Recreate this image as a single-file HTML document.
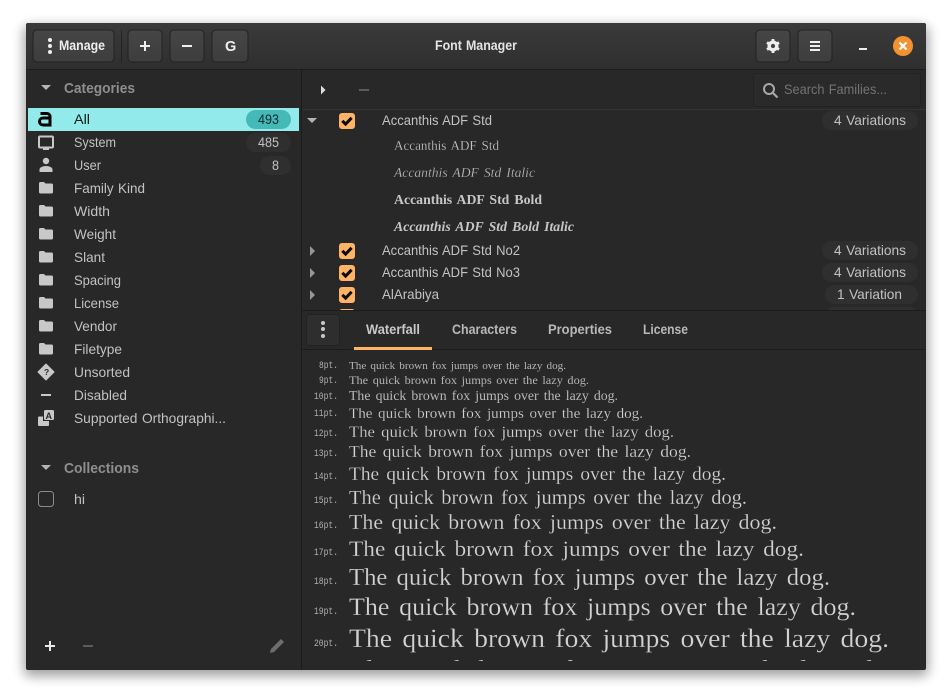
<!DOCTYPE html>
<html><head><meta charset="utf-8"><style>
html,body{margin:0;padding:0;background:#fff;width:952px;height:699px;overflow:hidden}
svg{display:block;position:absolute;left:0;top:0}
text{font-family:"Liberation Sans",sans-serif;fill:#c2c2c2;font-size:14px;word-spacing:.05em}
.s{font-family:"Liberation Serif",serif;fill:#d2d2d2;word-spacing:.12em}
.t{stroke:#282828;stroke-width:.18px}
.m{font-family:"Liberation Mono",monospace;fill:#b0b0b0;font-size:10px}
.b{font-weight:bold;fill:#d6d6d6;font-size:14px}
.h{font-weight:bold;fill:#8e8e8e;font-size:15px}
</style></head><body>
<svg width="952" height="699" viewBox="0 0 952 699" xmlns="http://www.w3.org/2000/svg">
<defs>
<linearGradient id="hd" x1="0" y1="0" x2="0" y2="1"><stop offset="0" stop-color="#3a3a3a"/><stop offset="1" stop-color="#2f2f2f"/></linearGradient>
<linearGradient id="bt" x1="0" y1="0" x2="0" y2="1"><stop offset="0" stop-color="#464646"/><stop offset="1" stop-color="#3d3d3d"/></linearGradient>
<filter id="sh" x="-5%" y="-5%" width="110%" height="112%"><feGaussianBlur stdDeviation="6"/></filter>
<clipPath id="wf"><rect x="302" y="350" width="624" height="311"/></clipPath>
<clipPath id="fl"><rect x="302" y="110" width="624" height="200"/></clipPath>
<g id="folder"><path d="M0 2.500a1.500 1.500 0 0 1 1.500-1.500h3.500l1.500 1.500h6a1.500 1.500 0 0 1 1.500 1.500v7a1.500 1.500 0 0 1-1.500 1.500h-11a1.500 1.500 0 0 1-1.500-1.500z" fill="#c8c8c8"/></g>
<g id="chk"><rect x="0" y="0" width="16" height="16" rx="3" fill="#ffb366"/><path d="M3.300 7.800l3.300 3.300 6-6.300" fill="none" stroke="#0c0c0c" stroke-width="3"/></g>
<path id="td" d="M0 0h10l-5 5z" fill="#b4b4b4"/>
</defs>

<rect x="24" y="26" width="904" height="650" rx="6" fill="#000" opacity="0.38" filter="url(#sh)"/>
<rect x="26" y="23" width="900" height="647" rx="2" fill="#282828"/>
<path d="M26 69V27a4 4 0 0 1 4-4h892a4 4 0 0 1 4 4v42z" fill="url(#hd)"/>
<rect x="26" y="69" width="900" height="1" fill="#1e1e1e"/>
<rect x="301" y="70" width="1" height="600" fill="#1c1c1c"/>

<!-- Header buttons -->
<g stroke="#222" stroke-width="1" fill="url(#bt)">
<rect x="33" y="30" width="81" height="32" rx="4"/>
<rect x="128" y="30" width="34" height="32" rx="4"/>
<rect x="170" y="30" width="34" height="32" rx="4"/>
<rect x="212" y="30" width="36" height="32" rx="4"/>
<rect x="756" y="30" width="34" height="32" rx="4"/>
<rect x="798" y="30" width="34" height="32" rx="4"/>
</g>
<rect x="121" y="30" width="1" height="33" fill="#242424"/>
<circle cx="50" cy="40" r="2" fill="#eee"/><circle cx="50" cy="46" r="2" fill="#eee"/><circle cx="50" cy="52" r="2" fill="#eee"/>
<text x="59" y="50" class="b" textLength="46" lengthAdjust="spacingAndGlyphs" style="fill:#eee">Manage</text>
<path d="M140 46h10M145 41v10" stroke="#eee" stroke-width="2"/>
<path d="M182 46h10" stroke="#eee" stroke-width="2"/>
<text x="225" y="51" class="b" style="fill:#eee;font-size:14.500px">G</text>
<text x="435" y="50" class="b" textLength="82" lengthAdjust="spacingAndGlyphs" style="fill:#e4e4e4">Font Manager</text>
<!-- gear -->
<g transform="translate(773 46)"><circle r="3.800" fill="none" stroke="#eee" stroke-width="3.400"/><g stroke="#eee" stroke-width="2.800"><path d="M0-7V-4.500M0 4.500V7M-6-3.500L-3.900-2.250M3.900 2.250L6 3.500M-6 3.500L-3.900 2.250M3.900-2.250L6-3.500"/></g></g>
<path d="M810 42h10M810 46h10M810 50h10" stroke="#eee" stroke-width="2"/>
<rect x="859" y="48" width="8" height="2" fill="#eee"/>
<circle cx="903" cy="46" r="10" fill="#f39230"/>
<path d="M899.500 42.500l7 7M906.500 42.500l-7 7" stroke="#fff" stroke-width="2.200"/>

<!-- Sidebar -->
<use href="#td" x="41" y="85"/>
<text x="64" y="93" class="h" textLength="71" lengthAdjust="spacingAndGlyphs">Categories</text>
<rect x="28" y="108" width="271" height="23" fill="#93eaea"/>
<rect x="246" y="110" width="45" height="19" rx="9.500" fill="#45b8b8"/>
<rect x="246" y="133" width="45" height="19" rx="9.500" fill="#2f2f2f"/>
<rect x="260" y="156" width="31" height="19" rx="9.500" fill="#2f2f2f"/>
<text x="258" y="124" textLength="21" lengthAdjust="spacingAndGlyphs" style="fill:#0a2a2a;font-size:13.500px">493</text>
<text x="258" y="147" textLength="21" lengthAdjust="spacingAndGlyphs" style="font-size:13.500px">485</text>
<text x="272" y="170" textLength="7" lengthAdjust="spacingAndGlyphs" style="font-size:13.500px">8</text>

<path d="M40.500 113.500h6.500a3 3 0 0 1 3 3v8.500h-7a3.500 3.500 0 0 1 0-7h6" fill="none" stroke="#000" stroke-width="3"/>
<path d="M39 137.500a1 1 0 0 1 1-1h12a1 1 0 0 1 1 1v9a1 1 0 0 1-1 1h-12a1 1 0 0 1-1-1z" fill="none" stroke="#c8c8c8" stroke-width="2"/><rect x="43" y="148" width="6" height="2" fill="#c8c8c8"/>
<circle cx="46" cy="161" r="3.200" fill="#c8c8c8"/><path d="M39.500 172v-2.500c0-2 3-3.500 6.500-3.500s6.500 1.500 6.500 3.500v2.500z" fill="#c8c8c8"/>
<use href="#folder" x="39" y="181"/>
<use href="#folder" x="39" y="204"/>
<use href="#folder" x="39" y="227"/>
<use href="#folder" x="39" y="250"/>
<use href="#folder" x="39" y="273"/>
<use href="#folder" x="39" y="296"/>
<use href="#folder" x="39" y="319"/>
<use href="#folder" x="39" y="342"/>
<path d="M46 364l8 8-8 8-8-8z" fill="#c8c8c8" stroke="#c8c8c8" stroke-linejoin="round"/>
<text x="44" y="375" style="fill:#282828;font-size:8.500px;font-weight:bold">?</text>
<rect x="41" y="394" width="10" height="2" fill="#c8c8c8"/>
<rect x="44" y="410" width="10" height="10" rx="1.500" fill="#c8c8c8"/><text x="45.500" y="419" style="fill:#282828;font-size:9px;font-weight:bold">A</text>
<path d="M38 417.500a1 1 0 0 1 1-1h4v4.500h6v4a1 1 0 0 1-1 1h-9a1 1 0 0 1-1-1z" fill="#c8c8c8"/>

<text x="74" y="124" textLength="16" lengthAdjust="spacingAndGlyphs" style="fill:#0a1a1a">All</text>
<text x="74" y="147" textLength="42" lengthAdjust="spacingAndGlyphs">System</text>
<text x="74" y="170" textLength="27" lengthAdjust="spacingAndGlyphs">User</text>
<text x="74" y="193" textLength="71" lengthAdjust="spacingAndGlyphs">Family Kind</text>
<text x="74" y="216" textLength="36" lengthAdjust="spacingAndGlyphs">Width</text>
<text x="74" y="239" textLength="42" lengthAdjust="spacingAndGlyphs">Weight</text>
<text x="74" y="262" textLength="31" lengthAdjust="spacingAndGlyphs">Slant</text>
<text x="74" y="285" textLength="47" lengthAdjust="spacingAndGlyphs">Spacing</text>
<text x="74" y="308" textLength="45" lengthAdjust="spacingAndGlyphs">License</text>
<text x="74" y="331" textLength="43" lengthAdjust="spacingAndGlyphs">Vendor</text>
<text x="74" y="354" textLength="48" lengthAdjust="spacingAndGlyphs">Filetype</text>
<text x="74" y="377" textLength="56" lengthAdjust="spacingAndGlyphs">Unsorted</text>
<text x="74" y="400" textLength="53" lengthAdjust="spacingAndGlyphs">Disabled</text>
<text x="74" y="423" textLength="152" lengthAdjust="spacingAndGlyphs">Supported Orthographi...</text>

<use href="#td" x="41" y="465"/>
<text x="64" y="473" class="h" textLength="75" lengthAdjust="spacingAndGlyphs">Collections</text>
<rect x="38.500" y="491.500" width="15" height="15" rx="3" fill="none" stroke="#8c8c8c"/>
<text x="74" y="504" textLength="11" lengthAdjust="spacingAndGlyphs">hi</text>
<path d="M45 646h10M50 641v10" stroke="#e8e8e8" stroke-width="2"/>
<path d="M83 646h10" stroke="#5c5c5c" stroke-width="2"/>
<path d="M270 653l1-4 10-10 3 3-10 10z" fill="#6e6e6e"/>

<!-- family toolbar -->
<rect x="302" y="109" width="624" height="1" fill="#333"/>
<path d="M321 85.500l4.500 4.500-4.500 4.500z" fill="#dcdcdc"/>
<rect x="359" y="89" width="10" height="2" fill="#5c5c5c"/>
<rect x="753.500" y="73.500" width="167" height="33" rx="3" fill="#2a2a2a" stroke="#222"/>
<circle cx="769" cy="89" r="5" fill="none" stroke="#a8a8a8" stroke-width="2"/><path d="M772.500 92.500l5 5" stroke="#a8a8a8" stroke-width="2.200"/>
<text x="784" y="94" textLength="103" lengthAdjust="spacingAndGlyphs" style="fill:#737373">Search Families...</text>

<!-- family list -->
<g clip-path="url(#fl)">
<use href="#td" x="307" y="118"/>
<use href="#chk" x="339" y="113"/>
<text x="382" y="125" textLength="110" lengthAdjust="spacingAndGlyphs">Accanthis ADF Std</text>
<rect x="822" y="111" width="96" height="19" rx="9.500" fill="#2f2f2f"/>
<text x="834" y="125" textLength="72" lengthAdjust="spacingAndGlyphs">4 Variations</text>
<text x="394" y="150" class="s t" textLength="105" lengthAdjust="spacingAndGlyphs" style="font-size:14px;fill:#c4c4c4">Accanthis ADF Std</text>
<text x="394" y="177" class="s t" textLength="141" lengthAdjust="spacingAndGlyphs" style="font-size:14px;font-style:italic;fill:#b8b8b8">Accanthis ADF Std Italic</text>
<text x="394" y="204" class="s" textLength="148" lengthAdjust="spacingAndGlyphs" style="font-size:14px;font-weight:bold;fill:#c6c6c6">Accanthis ADF Std Bold</text>
<text x="394" y="231" class="s" textLength="180" lengthAdjust="spacingAndGlyphs" style="font-size:14px;font-weight:bold;font-style:italic;fill:#c6c6c6">Accanthis ADF Std Bold Italic</text>

<path d="M310 246l5 5-5 5z" fill="#969696"/>
<use href="#chk" x="339" y="243"/>
<text x="382" y="255" textLength="138" lengthAdjust="spacingAndGlyphs">Accanthis ADF Std No2</text>
<rect x="822" y="241" width="96" height="19" rx="9.500" fill="#2f2f2f"/>
<text x="834" y="255" textLength="72" lengthAdjust="spacingAndGlyphs">4 Variations</text>

<path d="M310 268l5 5-5 5z" fill="#969696"/>
<use href="#chk" x="339" y="265"/>
<text x="382" y="277" textLength="138" lengthAdjust="spacingAndGlyphs">Accanthis ADF Std No3</text>
<rect x="822" y="263" width="96" height="19" rx="9.500" fill="#2f2f2f"/>
<text x="834" y="277" textLength="72" lengthAdjust="spacingAndGlyphs">4 Variations</text>

<path d="M310 290l5 5-5 5z" fill="#969696"/>
<use href="#chk" x="339" y="287"/>
<text x="382" y="299" textLength="57" lengthAdjust="spacingAndGlyphs">AlArabiya</text>
<rect x="825" y="285" width="93" height="19" rx="9.500" fill="#2f2f2f"/>
<text x="837" y="299" textLength="65" lengthAdjust="spacingAndGlyphs">1 Variation</text>

<rect x="339" y="309" width="16" height="16" rx="3" fill="#ffb366"/>
<rect x="825" y="307" width="93" height="19" rx="9.500" fill="#2f2f2f"/>
<text x="837" y="321" textLength="65" lengthAdjust="spacingAndGlyphs">1 Variation</text>
</g>

<!-- tab bar -->
<rect x="302" y="310" width="624" height="1" fill="#1c1c1c"/>
<rect x="302" y="349" width="624" height="1" fill="#1c1c1c"/>
<rect x="306.500" y="314.500" width="33" height="31" rx="3" fill="#2e2e2e" stroke="#222"/>
<circle cx="323" cy="323" r="2" fill="#c8c8c8"/><circle cx="323" cy="329" r="2" fill="#c8c8c8"/><circle cx="323" cy="336" r="2" fill="#c8c8c8"/>
<text x="366" y="334" class="b" textLength="54" lengthAdjust="spacingAndGlyphs" style="fill:#c8c8c8">Waterfall</text>
<text x="452" y="334" class="b" textLength="65" lengthAdjust="spacingAndGlyphs" style="fill:#b8b8b8">Characters</text>
<text x="548" y="334" class="b" textLength="64" lengthAdjust="spacingAndGlyphs" style="fill:#b8b8b8">Properties</text>
<text x="643" y="334" class="b" textLength="45" lengthAdjust="spacingAndGlyphs" style="fill:#b8b8b8">License</text>
<rect x="354" y="347" width="78" height="3" fill="#ffb366"/>

<!-- waterfall -->
<g clip-path="url(#wf)">
<text class="m" x="319" y="368" textLength="19" lengthAdjust="spacingAndGlyphs">8pt.</text>
<text class="m" x="319" y="383" textLength="19" lengthAdjust="spacingAndGlyphs">9pt.</text>
<text class="m" x="314" y="399" textLength="24" lengthAdjust="spacingAndGlyphs">10pt.</text>
<text class="m" x="314" y="416" textLength="24" lengthAdjust="spacingAndGlyphs">11pt.</text>
<text class="m" x="314" y="436" textLength="24" lengthAdjust="spacingAndGlyphs">12pt.</text>
<text class="m" x="314" y="456" textLength="24" lengthAdjust="spacingAndGlyphs">13pt.</text>
<text class="m" x="314" y="479" textLength="24" lengthAdjust="spacingAndGlyphs">14pt.</text>
<text class="m" x="314" y="503" textLength="24" lengthAdjust="spacingAndGlyphs">15pt.</text>
<text class="m" x="314" y="528" textLength="24" lengthAdjust="spacingAndGlyphs">16pt.</text>
<text class="m" x="314" y="555" textLength="24" lengthAdjust="spacingAndGlyphs">17pt.</text>
<text class="m" x="314" y="584" textLength="24" lengthAdjust="spacingAndGlyphs">18pt.</text>
<text class="m" x="314" y="614" textLength="24" lengthAdjust="spacingAndGlyphs">19pt.</text>
<text class="m" x="314" y="646" textLength="24" lengthAdjust="spacingAndGlyphs">20pt.</text>
<text class="s" x="349" y="369" style="font-size:10.670px;fill:#b4b4b4" textLength="217" lengthAdjust="spacingAndGlyphs">The quick brown fox jumps over the lazy dog.</text>
<text class="s" x="349" y="384" style="font-size:12px;fill:#b4b4b4" textLength="240" lengthAdjust="spacingAndGlyphs">The quick brown fox jumps over the lazy dog.</text>
<text class="s" x="349" y="400" style="font-size:13.330px;fill:#b8b8b8" textLength="269" lengthAdjust="spacingAndGlyphs">The quick brown fox jumps over the lazy dog.</text>
<text class="s t" x="349" y="418" style="font-size:14.670px" textLength="294" lengthAdjust="spacingAndGlyphs">The quick brown fox jumps over the lazy dog.</text>
<text class="s t" x="349" y="437" style="font-size:16px" textLength="325" lengthAdjust="spacingAndGlyphs">The quick brown fox jumps over the lazy dog.</text>
<text class="s t" x="349" y="457" style="font-size:17.330px" textLength="342" lengthAdjust="spacingAndGlyphs">The quick brown fox jumps over the lazy dog.</text>
<text class="s t" x="349" y="480" style="font-size:18.670px" textLength="377" lengthAdjust="spacingAndGlyphs">The quick brown fox jumps over the lazy dog.</text>
<text class="s t" x="349" y="504" style="font-size:20px" textLength="398" lengthAdjust="spacingAndGlyphs">The quick brown fox jumps over the lazy dog.</text>
<text class="s t" x="349" y="529" style="font-size:21.330px" textLength="428" lengthAdjust="spacingAndGlyphs">The quick brown fox jumps over the lazy dog.</text>
<text class="s t" x="349" y="556" style="font-size:22.670px" textLength="455" lengthAdjust="spacingAndGlyphs">The quick brown fox jumps over the lazy dog.</text>
<text class="s t" x="349" y="585" style="font-size:24px" textLength="481" lengthAdjust="spacingAndGlyphs">The quick brown fox jumps over the lazy dog.</text>
<text class="s t" x="349" y="615" style="font-size:25.330px" textLength="507" lengthAdjust="spacingAndGlyphs">The quick brown fox jumps over the lazy dog.</text>
<text class="s t" x="349" y="647" style="font-size:26.670px" textLength="540" lengthAdjust="spacingAndGlyphs">The quick brown fox jumps over the lazy dog.</text>
<text class="s t" x="349" y="680" style="font-size:28px" textLength="560" lengthAdjust="spacingAndGlyphs">The quick brown fox jumps over the lazy dog.</text>
</g>
</svg>
</body></html>
